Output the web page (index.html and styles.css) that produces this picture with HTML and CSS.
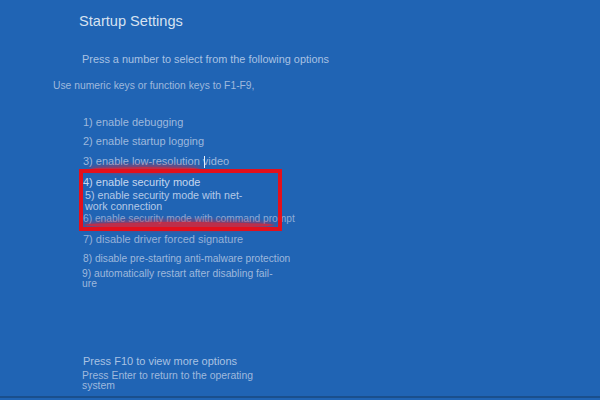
FILE: index.html
```html
<!DOCTYPE html>
<html lang="en">
<head>
<meta charset="UTF-8">
<meta name="viewport" content="width=device-width,initial-scale=1.0">
<title>Startup Settings</title>
<link rel="stylesheet" href="styles.css">
</head>
<body>

<main class="screen">
  <h1 class="title">Startup Settings</h1>
  <p class="lead">Press a number to select from the following options</p>
  <p class="hint">Use numeric keys or function keys to F1-F9,</p>

  <ol class="options">
    <li class="opt o1">1) enable debugging</li>
    <li class="opt o2">2) enable startup logging</li>
    <li class="opt o3">3) enable low-resolution video</li>
    <li class="opt o4">4) enable security mode</li>
    <li class="opt o5">5) enable security mode with net-<br>work connection</li>
    <li class="opt o6">6) enable security mode with command prompt</li>
    <li class="opt o7">7) disable driver forced signature</li>
    <li class="opt o8">8) disable pre-starting anti-malware protection</li>
    <li class="opt o9">9) automatically restart after disabling fail-<br>ure</li>
  </ol>

  <p class="more">Press F10 to view more options</p>
  <p class="back">Press Enter to return to the operating<br>system</p>

  <!-- overlays: highlight box, marker smudges, mouse cursor -->
  <div class="smudge smudge-top"></div>
  <div class="smudge smudge-bottom"></div>
  <div class="highlight"></div>
  <div class="ibeam"></div>
</main>

</body>
</html>
```

FILE: styles.css
```css
html,body{
  margin:0;
  padding:0;
  background:#2064b4;
  font-family:"Liberation Sans",Arial,sans-serif;
  overflow:hidden;
}

/* ----------  SCREEN  ---------- */
.screen{
  position:relative;
  height:398px;
  padding-top:11px;
  box-sizing:border-box;
  border-bottom:2px solid #1a4f8c;
}

.title{
  margin:0 0 0 79px;
  font-size:14.6px;
  line-height:20px;
  font-weight:400;
  color:#d6e2f1;
}
.lead{
  margin:21px 0 0 82px;
  font-size:10.9px;
  line-height:14px;
  color:#a9c2e3;
}
.hint{
  margin:13px 0 0 53px;
  font-size:10.3px;
  line-height:13px;
  color:#9fb9dd;
}

/* ----------  OPTIONS  ---------- */
.options{
  list-style:none;
  margin:23px 0 0;
  padding:0 0 0 83px;
}
.opt{
  font-size:11px;
  line-height:14px;
  color:#9eb8dc;
}
.o2{margin-top:5px;}
.o3{margin-top:6px;}
.o4{margin-top:7px;color:#c6d6ee;}
.o5{
  margin:1px 0 0 2px;
  font-size:10.7px;
  line-height:11px;
  color:#b5c9e7;
}
.o6{
  font-size:10.2px;
  line-height:13px;
  color:#8eacd6;
}
.o7{margin-top:7px;color:#95b0d8;}
.o8{margin-top:6px;font-size:10.2px;line-height:13px;}
.o9{
  margin:4px 0 0 -1px;
  font-size:10.3px;
  line-height:9.5px;
}

.more{
  margin:66px 0 0 83px;
  font-size:11px;
  line-height:14px;
  color:#a9c2e3;
}
.back{
  margin:3px 0 0 82px;
  font-size:10.4px;
  line-height:9.5px;
  color:#9fb9dd;
}

/* ----------  OVERLAYS  ---------- */
.highlight{
  position:absolute;
  left:79px;
  top:169px;
  width:203px;
  height:62px;
  box-sizing:border-box;
  border:4px solid #e3101c;
}
.smudge{
  position:absolute;
  border-radius:50%;
  background:rgba(240,30,40,.75);
  box-shadow:0 0 4px 2px rgba(240,30,40,.55);
}
.smudge-top{
  left:90px;
  top:167px;
  width:110px;
  height:4px;
}
.smudge-bottom{
  left:84px;
  top:222px;
  width:190px;
  height:6px;
}
.ibeam{
  position:absolute;
  left:204px;
  top:156px;
  width:1px;
  height:12px;
  background:#e6eef8;
}
```
